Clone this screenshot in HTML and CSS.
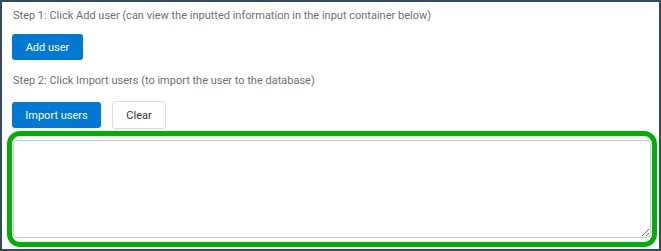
FILE: index.html
```html
<!DOCTYPE html>
<html>
<head>
<meta charset="utf-8">
<link rel="stylesheet" href="styles.css">
</head>
<body>
<div class="frame">
  <div class="row step">Step 1: Click Add user (can view the inputted information in the input container below)</div>
  <div class="row buttons first">
    <button class="btn primary add">Add user</button>
  </div>
  <div class="row step second">Step 2: Click Import users (to import the user to the database)</div>
  <div class="row buttons">
    <button class="btn primary import">Import users</button>
    <button class="btn secondary clear">Clear</button>
  </div>
  <div class="focus-ring">
    <textarea class="input"></textarea>
  </div>
</div>
</body>
</html>
```
FILE: styles.css
```css
html, body {
  margin: 0;
  padding: 0;
  background: #ffffff;
}
.frame {
  box-sizing: border-box;
  width: 661px;
  height: 251px;
  border: 2px solid #34495e;
  font-family: Roboto, "Liberation Sans", sans-serif;
  font-size: 11px;
  display: flex;
  flex-direction: column;
}
.row {
  padding-left: 10px;
}
.step {
  color: #707070;
  line-height: 20px;
  margin-top: 4px;
  padding-left: 11px;
}
.step.second {
  margin-top: 11px;
}
.buttons {
  display: flex;
  align-items: center;
  gap: 11px;
  margin-top: 10px;
}
.buttons.first {
  margin-top: 8px;
}
.btn {
  font-family: Roboto, "Liberation Sans", sans-serif;
  font-size: 11px;
  border-radius: 3px;
  padding: 0;
  margin: 0;
  cursor: pointer;
}
.primary {
  background: #0078d4;
  color: #ffffff;
  border: none;
  height: 26px;
}
.add {
  width: 71px;
}
.import {
  width: 89px;
}
.secondary {
  background: #ffffff;
  color: #333333;
  border: 1px solid #dddddd;
  height: 28px;
  width: 54px;
}
.focus-ring {
  margin: 2px 2px 0 5px;
  border: 5px solid #00b000;
  border-radius: 13px;
  padding: 4px 1px;
  display: flex;
}
.input {
  box-sizing: border-box;
  flex: 1;
  height: 98px;
  margin: 0;
  border: 1px solid #c8c8c8;
  border-radius: 4px;
  resize: both;
  outline: none;
}
```
